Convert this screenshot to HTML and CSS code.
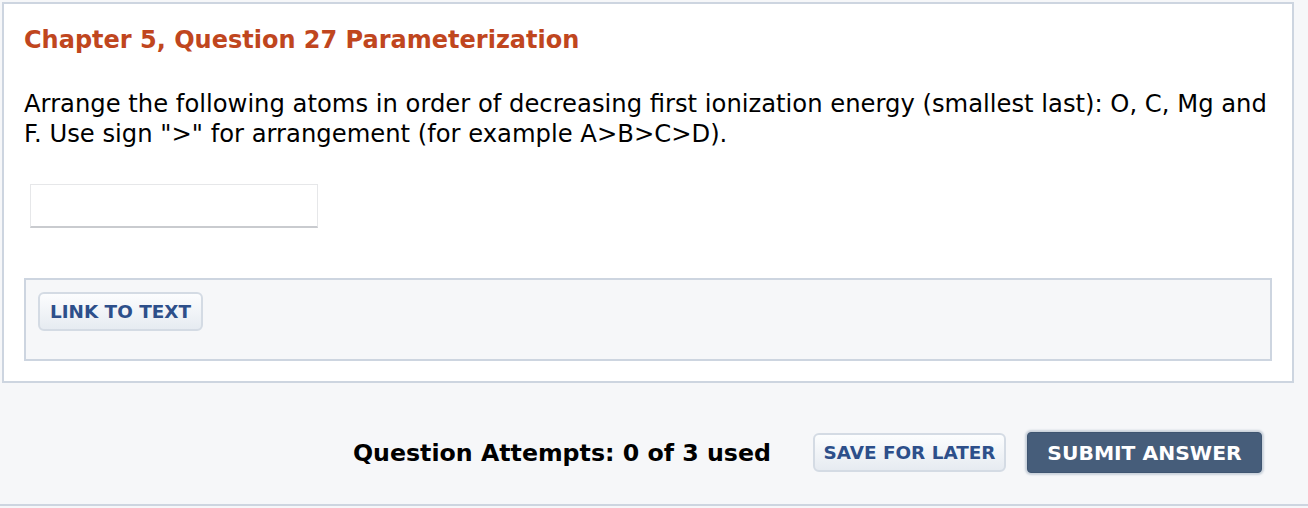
FILE: index.html
```html
<!DOCTYPE html>
<html lang="en">
<head>
    <meta charset="UTF-8">
    <meta name="viewport" content="width=device-width, initial-scale=1.0">
    <title>Chapter 5, Question 27</title>
    <link rel="stylesheet" href="styles.css">
</head>
<body>
    <div class="question-card">
        <h2 class="question-title">Chapter 5, Question 27 Parameterization</h2>
        <p class="question-text">Arrange the following atoms in order of decreasing first ionization energy (smallest last): O, C, Mg and F. Use sign "&gt;" for arrangement (for example A&gt;B&gt;C&gt;D).</p>
        <div class="answer-row">
            <input class="answer-input" type="text" autocomplete="off">
        </div>
        <div class="resource-box">
            <button class="btn btn-light">LINK TO TEXT</button>
        </div>
    </div>
    <div class="question-footer">
        <span class="attempts">Question Attempts: 0 of 3 used</span>
        <button class="btn btn-light btn-save">SAVE FOR LATER</button>
        <button class="btn btn-submit">SUBMIT ANSWER</button>
    </div>
</body>
</html>
```
FILE: styles.css
```css
body {
    margin: 0;
    background: #f6f7f9;
    font-family: "DejaVu Sans", Verdana, sans-serif;
    color: #000;
}

.question-card {
    margin: 2px;
    width: 1248px;
    background: #fff;
    border: 2px solid #cdd5e0;
    padding: 21px 20px 20px 20px;
}

.question-title {
    margin: 0;
    font-size: 24px;
    line-height: 30px;
    font-weight: bold;
    color: #c0461e;
}

.question-text {
    margin: 34px 0 0 0;
    font-size: 24.25px;
    line-height: 30px;
}

.answer-row {
    padding: 0 6px;
    margin-top: 35px;
    height: 44px;
}

.answer-input {
    display: block;
    width: 288px;
    height: 44px;
    box-sizing: border-box;
    border: 1px solid #e6e7e9;
    border-bottom: 2px solid #c9cbcf;
    outline: none;
    font-size: 18px;
}

.resource-box {
    margin-top: 50px;
    height: 83px;
    background: #f6f7f9;
    border: 2px solid #cdd5e0;
    box-sizing: border-box;
    padding: 12px;
}

.btn {
    font-family: "DejaVu Sans", Verdana, sans-serif;
    font-weight: bold;
    border-radius: 6px;
    cursor: pointer;
    box-sizing: border-box;
    white-space: nowrap;
}

.btn-light {
    height: 39px;
    padding: 0 10px;
    font-size: 18.4px;
    color: #2d4f8a;
    background: linear-gradient(#fcfdfe, #e6ebf1);
    border: 2px solid #d4dbe4;
}

.question-footer {
    display: flex;
    justify-content: flex-end;
    align-items: center;
    height: 103px;
    padding: 16px 46px 0 0;
    border-bottom: 2px solid #cdd5e0;
}

.attempts {
    font-size: 23.7px;
    font-weight: bold;
    margin-right: 42px;
}

.btn-save {
    width: 193px;
    padding: 0;
    margin-right: 21px;
}

.btn-submit {
    width: 235px;
    height: 41px;
    padding: 0;
    font-size: 20.3px;
    color: #fff;
    background: #465d7a;
    border: 1px solid #3f5571;
    border-radius: 4px;
    box-shadow: 0 0 2px 2px #cad2dc;
}
```
